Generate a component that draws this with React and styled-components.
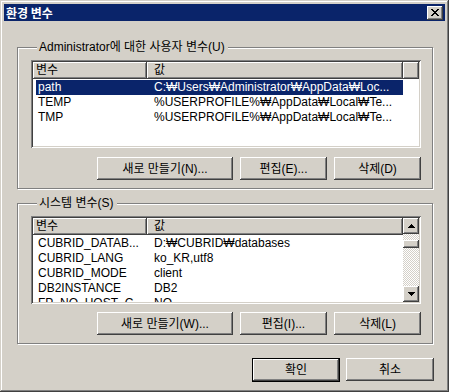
import React from "react";
import styled, { createGlobalStyle } from "styled-components";

const GlobalStyle = createGlobalStyle`
  html, body {
    margin: 0;
    padding: 0;
    background: #d4d0c8;
  }
  * {
    box-sizing: border-box;
  }
`;

const FONT = `"Liberation Sans", "Noto Sans CJK KR", sans-serif`;

const raised = `
  box-shadow: inset -1px -1px #404040, inset 1px 1px #ffffff,
    inset -2px -2px #808080, inset 2px 2px #d4d0c8;
`;

const Window = styled.div`
  width: 449px;
  height: 392px;
  padding: 4px;
  background: #d4d0c8;
  box-shadow: inset -1px -1px #404040, inset 1px 1px #d4d0c8,
    inset -2px -2px #808080, inset 2px 2px #ffffff;
  display: flex;
  flex-direction: column;
  font-family: ${FONT};
  font-size: 12px;
  color: #000;
`;

const TitleBar = styled.div`
  height: 17px;
  background: #0a246a;
  display: flex;
  align-items: center;
  justify-content: space-between;
  padding: 0 2px 0 2px;
`;

const Title = styled.span`
  color: #fff;
  font-weight: bold;
  font-size: 12px;
  line-height: 14px;
  font-family: "Noto Sans CJK KR", sans-serif;
`;

const CloseButton = styled.div`
  width: 16px;
  height: 14px;
  background: #d4d0c8;
  ${raised}
  display: flex;
  align-items: center;
  justify-content: center;
  padding-bottom: 1px;
`;

const Body = styled.div`
  flex: 1;
  display: flex;
  flex-direction: column;
  padding: 0 11px 0 13px;
`;

const Group = styled.fieldset`
  width: 416px;
  margin: ${(p) => p.$top}px 0 0 0;
  padding: 6px 11px 8px 13px;
  border: 1px solid #808080;
  box-shadow: inset 1px 1px #ffffff, 1px 1px #ffffff;
  min-width: 0;
`;

const Legend = styled.legend`
  margin-left: 6px;
  padding: 0 3px 0 2px;
  line-height: 14px;
  background: #d4d0c8;
`;

const ListView = styled.div`
  width: 390px;
  height: 88px;
  padding: 2px;
  background: #fff;
  box-shadow: inset 1px 1px #808080, inset -1px -1px #ffffff,
    inset 2px 2px #404040, inset -2px -2px #d4d0c8;
  display: flex;
  overflow: hidden;
`;

const ListInner = styled.div`
  flex: 1;
  display: flex;
  flex-direction: column;
  overflow: hidden;
`;

const HeaderRow = styled.div`
  display: flex;
  height: 17px;
  flex-shrink: 0;
`;

const HeaderCell = styled.div`
  width: ${(p) => (p.$w ? `${p.$w}px` : "auto")};
  flex: ${(p) => (p.$w ? "none" : "1")};
  background: #d4d0c8;
  box-shadow: inset -1px -1px #404040, inset 1px 1px #ffffff,
    inset -2px -2px #808080;
  padding-left: ${(p) => p.$pad}px;
  line-height: 16px;
  white-space: nowrap;
`;

const Rows = styled.div`
  padding-top: 1px;
`;

const Row = styled.div`
  display: flex;
  height: 15px;
  margin-left: 3px;
  width: 367px;
  background: ${(p) => (p.$selected ? "#0a246a" : "transparent")};
  color: ${(p) => (p.$selected ? "#fff" : "#000")};
`;

const Cell = styled.div`
  width: ${(p) => p.$w}px;
  padding-left: ${(p) => p.$pad}px;
  line-height: 15px;
  white-space: nowrap;
  overflow: hidden;
`;

const ScrollBar = styled.div`
  width: 16px;
  display: flex;
  flex-direction: column;
  background: repeating-conic-gradient(#d4d0c8 0 25%, #ffffff 0 50%) 0 0 /
    2px 2px;
`;

const ScrollButton = styled.div`
  width: 16px;
  height: 16px;
  background: #d4d0c8;
  ${raised}
  display: flex;
  align-items: center;
  justify-content: center;
`;

const Thumb = styled.div`
  width: 16px;
  height: 8px;
  margin-top: 6px;
  background: #d4d0c8;
  ${raised}
`;

const Track = styled.div`
  flex: 1;
`;

const ButtonRow = styled.div`
  display: flex;
  justify-content: flex-end;
  gap: ${(p) => p.$gap}px;
  margin-top: ${(p) => p.$top}px;
`;

const Button = styled.div`
  width: ${(p) => p.$w}px;
  height: ${(p) => (p.$default ? 24 : 23)}px;
  background: #d4d0c8;
  display: flex;
  align-items: center;
  justify-content: center;
  line-height: 14px;
  white-space: nowrap;
  ${(p) =>
    p.$default
      ? `box-shadow: inset 0 0 0 1px #000, inset -2px -2px #404040, inset 2px 2px #ffffff,
    inset -3px -3px #808080;`
      : raised}
`;

const CloseGlyph = () => (
  <svg width="8" height="7" viewBox="0 0 8 7" shapeRendering="crispEdges">
    <path
      d="M0 0h2v1h-2zM6 0h2v1h-2zM1 1h2v1h-2zM5 1h2v1h-2zM2 2h4v1h-4zM3 3h2v1h-2zM2 4h4v1h-4zM1 5h2v1h-2zM5 5h2v1h-2zM0 6h2v1h-2zM6 6h2v1h-2z"
      fill="#000"
    />
  </svg>
);

const Arrow = ({ down }) => (
  <svg width="7" height="4" viewBox="0 0 7 4" shapeRendering="crispEdges">
    <path
      d={down ? "M0 0h7v1h-1v1h-1v1h-1v1h-1v-1h-1v-1h-1v-1h-1z" : "M3 0h1v1h1v1h1v1h1v1h-7v-1h1v-1h1v-1h1z"}
      fill="#000"
    />
  </svg>
);

const userVars = [
  ["path", "C:₩Users₩Administrator₩AppData₩Loc..."],
  ["TEMP", "%USERPROFILE%₩AppData₩Local₩Te..."],
  ["TMP", "%USERPROFILE%₩AppData₩Local₩Te..."],
];

const systemVars = [
  ["CUBRID_DATAB...", "D:₩CUBRID₩databases"],
  ["CUBRID_LANG", "ko_KR,utf8"],
  ["CUBRID_MODE", "client"],
  ["DB2INSTANCE", "DB2"],
  ["FP_NO_HOST_C...", "NO"],
];

const VarList = ({ items, selected, scroll }) => (
  <ListView>
    <ListInner>
      <HeaderRow>
        <HeaderCell $w={114} $pad={3}>변수</HeaderCell>
        <HeaderCell $w={256} $pad={7}>값</HeaderCell>
        {!scroll && <HeaderCell />}
      </HeaderRow>
      <Rows>
        {items.map(([name, value], i) => (
          <Row key={name} $selected={i === selected}>
            <Cell $w={111} $pad={2}>{name}</Cell>
            <Cell $w={256} $pad={7}>{value}</Cell>
          </Row>
        ))}
      </Rows>
    </ListInner>
    {scroll && (
      <ScrollBar>
        <ScrollButton>
          <Arrow />
        </ScrollButton>
        <Thumb />
        <Track />
        <ScrollButton>
          <Arrow down />
        </ScrollButton>
      </ScrollBar>
    )}
  </ListView>
);

export default function App() {
  return (
    <>
      <GlobalStyle />
      <Window>
        <TitleBar>
          <Title>환경 변수</Title>
          <CloseButton>
            <CloseGlyph />
          </CloseButton>
        </TitleBar>
        <Body>
          <Group $top={19}>
            <Legend>Administrator에 대한 사용자 변수(U)</Legend>
            <VarList items={userVars} selected={0} />
            <ButtonRow $gap={7} $top={9}>
              <Button $w={136}>새로 만들기(N)...</Button>
              <Button $w={87}>편집(E)...</Button>
              <Button $w={87}>삭제(D)</Button>
            </ButtonRow>
          </Group>
          <Group $top={7}>
            <Legend>시스템 변수(S)</Legend>
            <VarList items={systemVars} scroll />
            <ButtonRow $gap={7} $top={8}>
              <Button $w={136}>새로 만들기(W)...</Button>
              <Button $w={87}>편집(I)...</Button>
              <Button $w={87}>삭제(L)</Button>
            </ButtonRow>
          </Group>
          <ButtonRow $gap={6} $top={14}>
            <Button $w={88} $default>확인</Button>
            <Button $w={88}>취소</Button>
          </ButtonRow>
        </Body>
      </Window>
    </>
  );
}
